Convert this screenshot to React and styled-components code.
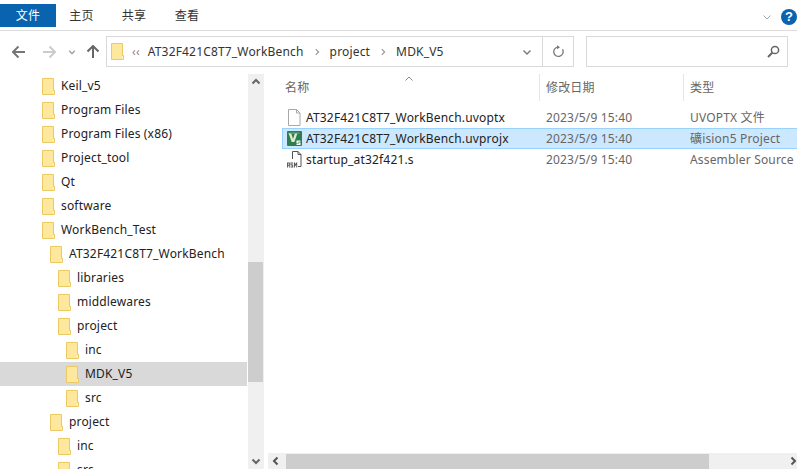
import React from "react";
import styled, { createGlobalStyle } from "styled-components";

const Global = createGlobalStyle`
  html, body { margin: 0; padding: 0; background: #fff; overflow: hidden; }
  * { box-sizing: border-box; }
`;
const FONT = `"Noto Sans", "Noto Sans CJK SC", sans-serif`;

const Window = styled.div`
  width: 797px; height: 469px; display: flex; flex-direction: column;
  overflow: hidden; background: #fff; color: #1a1a1a;
  font: 12px/16px ${FONT}; letter-spacing: 0.17px;
`;
const Ribbon = styled.div`
  height: 31px; flex: none; display: flex; align-items: flex-start; padding-top: 4px;
  border-bottom: 1px solid #dcdcdc;
`;
const RibbonTab = styled.div`
  height: 23px; display: flex; align-items: center; justify-content: center; padding-top: 1px;
  width: ${p => p.$w}px; font-size: 12px;
  background: ${p => (p.$active ? "#0a63ae" : "transparent")};
  color: ${p => (p.$active ? "#fff" : "#333")};
`;
const RibbonRight = styled.div`
  margin-left: auto; display: flex; align-items: center; gap: 9px; height: 27px; margin-top: -1px;
`;
const Help = styled.div`
  width: 16px; height: 16px; border-radius: 50%; background: #0a63ae; color: #fff;
  display: flex; align-items: center; justify-content: center; font-size: 13px; font-weight: 700;
  font-family: "Liberation Sans", sans-serif;
`;
const NavBar = styled.div`
  height: 36px; flex: none; padding-top: 5px; display: flex; align-items: flex-start; margin-bottom: 7px;
`;
const NavButtons = styled.div`
  width: 106px; height: 31px; padding-left: 12px; display: flex; align-items: center; flex: none;
`;
const NavSlot = styled.div`
  width: ${p => p.$w}px; margin-left: ${p => p.$ml || 0}px; display: flex; justify-content: center; flex: none;
`;
const Address = styled.div`
  width: 437px; height: 31px; border: 1px solid #d9d9d9; display: flex; align-items: center; flex: none;
  padding-left: 4px; font-size: 12px;
`;
const Crumb = styled.span`
  color: #333; white-space: nowrap;
`;
const Sep = styled.span`
  color: #888; margin: 0 ${p => p.$m ?? 9}px; display: inline-flex; align-items: center;
`;
const AddrEnd = styled.div`
  margin-left: auto; width: 31px; display: flex; justify-content: center; align-items: center; height: 100%;
`;
const Refresh = styled.div`
  width: 31px; height: 31px; border: 1px solid #d9d9d9; border-left: none; flex: none;
  display: flex; justify-content: center; align-items: center;
`;
const Search = styled.div`
  width: 202px; height: 31px; border: 1px solid #d9d9d9; margin-left: 12px; flex: none;
  display: flex; justify-content: flex-end; align-items: center; padding-right: 7px;
`;
const Main = styled.div`
  flex: 1; display: flex; min-height: 0;
`;
const TreePane = styled.div`
  width: 264px; flex: none; display: flex; height: 395px;
`;
const TreeList = styled.div`
  flex: 1; overflow: hidden; padding-top: 0; min-width: 0;
`;
const TreeRow = styled.div`
  height: 24px; display: flex; align-items: center; gap: 6px;
  padding-left: ${p => p.$indent}px; margin-right: 1px;
  background: ${p => (p.$sel ? "#d9d9d9" : "transparent")};
  color: #222; white-space: nowrap;
`;
const VScroll = styled.div`
  width: 16px; flex: none; background: #f0f0f0; display: flex; flex-direction: column; height: 395px;
`;
const ArrowCell = styled.div`
  height: 16px; flex: none; display: flex; align-items: center; justify-content: center;
  width: ${p => p.$w || 16}px;
`;
const VTrack = styled.div`
  flex: 1; display: flex; flex-direction: column;
`;
const VSpacer = styled.div`
  height: 172px; flex: none;
`;
const VThumb = styled.div`
  height: 120px; flex: none; background: #cdcdcd; width: 15px;
`;
const FilePane = styled.div`
  flex: 1; min-width: 0; display: flex; flex-direction: column; position: relative; padding-left: 4px; height: 395px;
`;
const HeaderRow = styled.div`
  height: 32px; display: flex; flex: none; position: relative; padding-left: 17px; align-items: flex-start; padding-top: 0;
`;
const SortCaret = styled.div`
  position: absolute; left: 136px; top: 0; line-height: 0;
`;
const HeadCell = styled.div`
  width: ${p => p.$w}px; height: 27px; display: flex; align-items: center; flex: none;
  color: #666; padding-left: ${p => p.$pad || 0}px;
  border-left: ${p => (p.$line ? "1px solid #e5e5e5" : "none")};
  white-space: nowrap;
`;
const FileList = styled.div`
  padding-top: 1px; display: flex; flex-direction: column; padding-left: 14px;
`;
const FileRow = styled.div`
  height: 21px; display: flex; align-items: center; flex: none; width: 530px; white-space: nowrap;
  ${p => p.$sel && "background: #cce8ff; box-shadow: inset 0 0 0 1px #99d1ff;"}
`;
const NameCell = styled.div`
  width: 264px; display: flex; align-items: center; padding-left: 5px; flex: none; color: #222;
`;
const IconSlot = styled.div`
  width: 19px; flex: none; display: flex; align-items: center;
`;
const DateCell = styled.div`
  width: 144px; flex: none; color: #666;
`;
const TypeCell = styled.div`
  flex: 1; color: #666; overflow: hidden;
`;
const HScroll = styled.div`
  position: absolute; left: 4px; bottom: 0; width: 533px; height: 16px; display: flex; background: #f0f0f0; align-items: center;
`;
const HThumb = styled.div`
  width: 423px; height: 15px; background: #cdcdcd; margin-left: 2px; flex: none;
`;
const HEnd = styled.div`
  margin-left: auto;
`;

const Folder = ({ s = 1 }) => (
  <svg width={13 * s} height={17 * s} viewBox="0 0 13 17" style={{ flex: "none" }}>
    <path d="M.5.5h11v16H.5z" fill="#ffe9a3" stroke="#ecc962" />
    <path d="M10 12.5h2.5v4H10z" fill="#fff3c8" stroke="#ecc962" />
    <rect x="1" y="1" width="10" height="15" fill="#fde89e" />
  </svg>
);
const Chevron = ({ dir = "down", color = "#777", size = 10, sw = 2 }) => {
  const d = { down: "M1.5 3.5 5 7l3.5-3.5", up: "M1.5 6.5 5 3l3.5 3.5", left: "M6.5 1.5 3 5l3.5 3.5", right: "M3.5 1.5 7 5 3.5 8.5" }[dir];
  return (
    <svg width={size} height={size} viewBox="0 0 10 10">
      <path d={d} fill="none" stroke={color} strokeWidth={sw} />
    </svg>
  );
};
const NavArrow = ({ color, flip, up }) => (
  <svg width="14" height="14" viewBox="0 0 14 14" style={{ transform: up ? "rotate(90deg)" : flip ? "scaleX(-1)" : "none" }}>
    <path d="M1 7h12M6.5 1.5 1 7l5.5 5.5" fill="none" stroke={color} strokeWidth="2" />
  </svg>
);
const BlankFile = () => (
  <svg width="14" height="17" viewBox="0 0 14 17" style={{ flex: "none" }}>
    <path d="M1.5.5h8l3.5 3.5v12.5H1.5z" fill="#fff" stroke="#a8a8a8" />
    <path d="M9.5.5V4H13" fill="none" stroke="#a8a8a8" />
  </svg>
);
const KeilIcon = () => (
  <svg width="15" height="15" viewBox="0 0 15 15" style={{ flex: "none" }}>
    <rect width="15" height="15" fill="#2f7d4f" rx="1" />
    <path d="M1.5 2h2.6l1.9 6 2-6h2.5L7.4 11H4.7z" fill="#dcebd5" />
    <path d="M2.5 1.5h10v1.2h-10z" fill="#6fa67f" />
    <path d="M9.5 9.5h4v1.3h-2.6v.6h2.6v2.6h-4v-1.2h2.6v-.6H9.5z" fill="#fff" />
  </svg>
);
const AsmIcon = () => (
  <svg width="15" height="17" viewBox="0 0 15 17" style={{ flex: "none" }}>
    <path d="M5.5 8V.5h5.5l3 3V15.5h-3" fill="#fff" stroke="#555" />
    <path d="M11 .5V3.5H14" fill="none" stroke="#555" />
    <path d="M0 11.5h2.8v5H1.9v-1.7h-1v1.7H0zm.9 1v1.3h1v-1.3zM3.5 11.5h2.7v1H4.4v1h1.8v3H3.5v-1h1.8v-1H3.5zM7 11.5h1l.6 2 .6-2h1v5h-.9v-3l-.5 1.6h-.4l-.5-1.6v3H7z" fill="#555" />
  </svg>
);

const tree = [
  ["Keil_v5", 42], ["Program Files", 42], ["Program Files (x86)", 42], ["Project_tool", 42],
  ["Qt", 42], ["software", 42], ["WorkBench_Test", 42], ["AT32F421C8T7_WorkBench", 50],
  ["libraries", 58], ["middlewares", 58], ["project", 58], ["inc", 66],
  ["MDK_V5", 66, true], ["src", 66], ["project", 50], ["inc", 58], ["src", 58],
];
const files = [
  { n: "AT32F421C8T7_WorkBench.uvoptx", t: "UVOPTX 文件", I: BlankFile },
  { n: "AT32F421C8T7_WorkBench.uvprojx", t: "礦ision5 Project", I: KeilIcon, sel: true },
  { n: "startup_at32f421.s", t: "Assembler Source", I: AsmIcon },
];

export default function App() {
  return (
    <Window>
      <Global />
      <Ribbon>
        <RibbonTab $w={56} $active>文件</RibbonTab>
        <RibbonTab $w={51}>主页</RibbonTab>
        <RibbonTab $w={54}>共享</RibbonTab>
        <RibbonTab $w={52}>查看</RibbonTab>
        <RibbonRight>
          <Chevron color="#aaa" size={10} sw={1} />
          <Help>?</Help>
        </RibbonRight>
      </Ribbon>
      <NavBar>
        <NavButtons>
          <NavSlot $w={14}><NavArrow color="#777" /></NavSlot>
          <NavSlot $w={32} $ml={7}><NavArrow color="#ccc" flip /></NavSlot>
          <NavSlot $w={14}><Chevron color="#999" size={8} sw={1.6} /></NavSlot>
          <NavSlot $w={27}><NavArrow color="#666" up /></NavSlot>
        </NavButtons>
        <Address>
          <Folder />
          <Sep $m={8}>‹‹</Sep>
          <Crumb>AT32F421C8T7_WorkBench</Crumb>
          <Sep $m={9}><Chevron color="#999" size={8} sw={1.5} dir="right" /></Sep>
          <Crumb>project</Crumb>
          <Sep $m={9}><Chevron color="#999" size={8} sw={1.5} dir="right" /></Sep>
          <Crumb>MDK_V5</Crumb>
          <AddrEnd><Chevron color="#777" size={10} sw={1.4} /></AddrEnd>
        </Address>
        <Refresh>
          <svg width="12" height="13" viewBox="0 0 12 13">
            <path d="M6 1.8a4.7 4.7 0 1 1-4 2.2" fill="none" stroke="#777" strokeWidth="1.3" transform="rotate(60 6 7)" />
            <path d="M5 0.2 8 2.2 5 4.2z" fill="#777" />
          </svg>
        </Refresh>
        <Search>
          <svg width="13" height="13" viewBox="0 0 13 13">
            <circle cx="8" cy="5" r="3.6" fill="none" stroke="#666" strokeWidth="1.5" />
            <path d="M5.5 7.5 1 12" stroke="#666" strokeWidth="2" />
          </svg>
        </Search>
      </NavBar>
      <Main>
        <TreePane>
          <TreeList>
            {tree.map(([name, indent, sel], i) => (
              <TreeRow key={i} $indent={indent} $sel={sel}>
                <Folder />
                <span>{name}</span>
              </TreeRow>
            ))}
          </TreeList>
          <VScroll>
            <ArrowCell><Chevron dir="up" color="#666" /></ArrowCell>
            <VTrack>
              <VSpacer />
              <VThumb />
            </VTrack>
            <ArrowCell><Chevron color="#666" /></ArrowCell>
          </VScroll>
        </TreePane>
        <FilePane>
          <HeaderRow>
            <SortCaret><Chevron dir="up" color="#888" size={10} sw={1} /></SortCaret>
            <HeadCell $w={254}>名称</HeadCell>
            <HeadCell $w={144} $line $pad={6}>修改日期</HeadCell>
            <HeadCell $w={100} $line $pad={6}>类型</HeadCell>
          </HeaderRow>
          <FileList>
            {files.map(({ n, t, I, sel }) => (
              <FileRow key={n} $sel={sel}>
                <NameCell><IconSlot><I /></IconSlot><span>{n}</span></NameCell>
                <DateCell>2023/5/9 15:40</DateCell>
                <TypeCell>{t}</TypeCell>
              </FileRow>
            ))}
          </FileList>
          <HScroll>
            <ArrowCell><Chevron dir="left" color="#555" /></ArrowCell>
            <HThumb />
            <HEnd><ArrowCell><Chevron dir="right" color="#555" /></ArrowCell></HEnd>
          </HScroll>
        </FilePane>
      </Main>
    </Window>
  );
}
